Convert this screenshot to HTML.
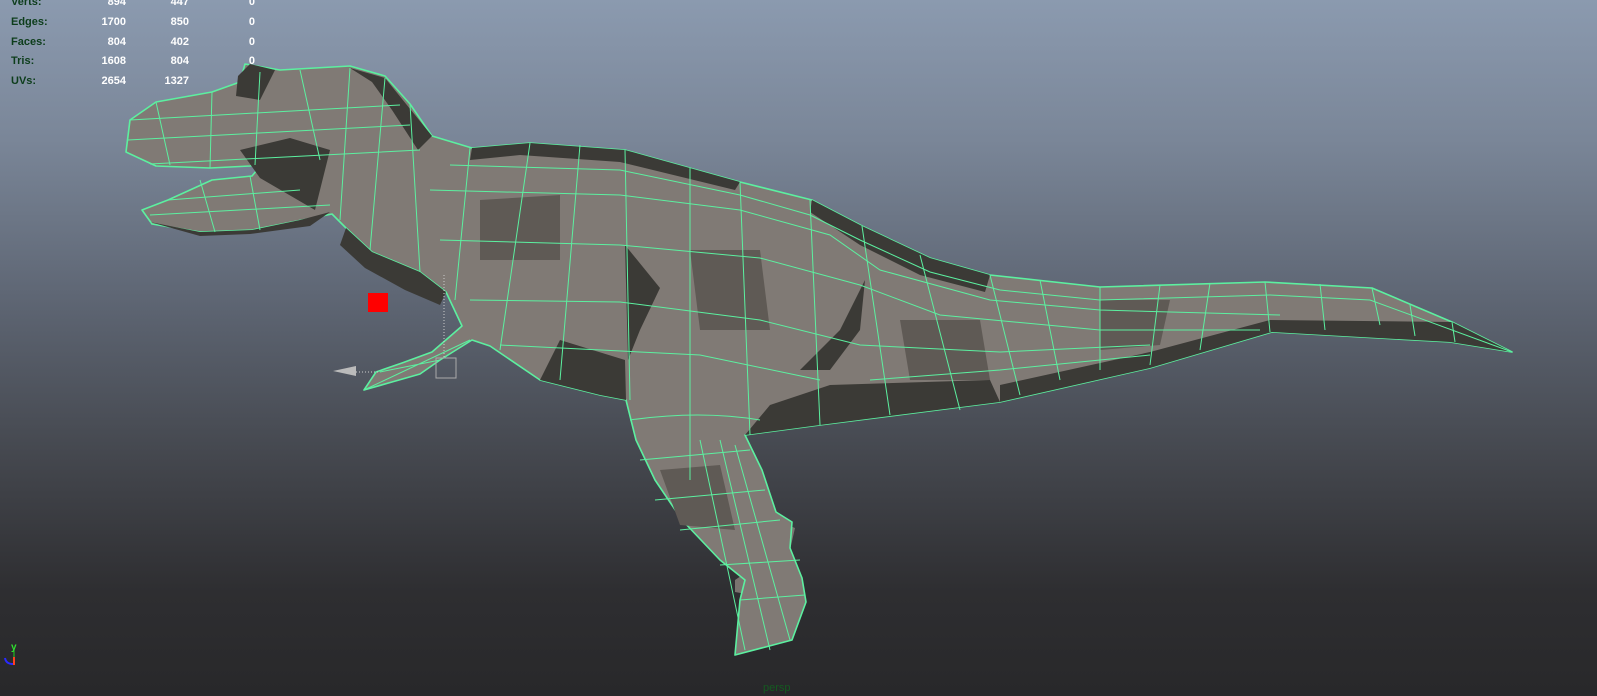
<!DOCTYPE html>
<html><head><meta charset="utf-8"><style>
html,body{margin:0;padding:0;width:1597px;height:696px;overflow:hidden}
body{background:linear-gradient(#8b9aaf 0%,#7a8698 20%,#5f6775 42%,#45484f 65%,#2e2e31 85%,#28282a 100%)}
.t{position:absolute;font:bold 11px "Liberation Sans",sans-serif;color:#0d3d1b}
.n{position:absolute;font:bold 11px "Liberation Sans",sans-serif;color:#fff;text-align:right;width:40px}
</style></head><body>
<div class="t" style="left:11px;top:-4px">Verts:</div>
<div class="t" style="left:11px;top:16px">Edges:</div>
<div class="t" style="left:11px;top:36px">Faces:</div>
<div class="t" style="left:11px;top:55px">Tris:</div>
<div class="t" style="left:11px;top:75px">UVs:</div>
<div class="n" style="left:86px;top:-4px">894</div><div class="n" style="left:149px;top:-4px">447</div><div class="n" style="left:215px;top:-4px">0</div>
<div class="n" style="left:86px;top:16px">1700</div><div class="n" style="left:149px;top:16px">850</div><div class="n" style="left:215px;top:16px">0</div>
<div class="n" style="left:86px;top:36px">804</div><div class="n" style="left:149px;top:36px">402</div><div class="n" style="left:215px;top:36px">0</div>
<div class="n" style="left:86px;top:55px">1608</div><div class="n" style="left:149px;top:55px">804</div><div class="n" style="left:215px;top:55px">0</div>
<div class="n" style="left:86px;top:75px">2654</div><div class="n" style="left:149px;top:75px">1327</div><div class="n" style="left:215px;top:75px">0</div>
<svg width="1597" height="696" style="position:absolute;left:0;top:0">
<polygon points="775,520 795,528 790,550 770,548" fill="#7a7470"/>
<polygon points="735,580 750,570 752,595 735,592" fill="#7a7470"/>
<polygon fill="#807a75" stroke="#5cf0a0" stroke-width="1.6" stroke-linejoin="round" points="
245,64 280,70 350,66 385,76 410,104 432,136 472,148 530,143 625,150 740,182 812,200 862,226 930,258 990,275 1100,287 1265,282 1372,288 1452,322 1512,352 1450,342 1272,332 1150,368 1000,402 820,425 745,435 762,470 776,512 792,522 790,548 802,578 806,602 792,640 735,655 740,600 745,580 720,560 682,520 655,480 636,440 626,400 600,395 540,380 490,346 472,340 440,360 420,374 392,382 364,390 376,372 402,363 432,352 462,326 446,292 420,272 372,252 346,228 332,214 302,220 252,230 200,232 152,224 142,210 168,200 212,180 252,176 262,164 250,166 210,168 156,166 126,152 130,120 156,102 212,92 240,82"/>
<g fill="#3b3a36">
<polygon points="238,76 250,64 275,70 260,100 236,96"/>
<polygon points="350,68 385,78 432,136 418,150 392,110 372,82"/>
<polygon points="472,148 530,143 625,150 740,182 735,190 620,162 520,155 470,160"/>
<polygon points="812,200 862,226 930,258 990,275 985,292 920,275 860,245 810,212"/>
<polygon points="1452,322 1512,352 1450,342 1272,332 1150,368 1000,402 1000,385 1150,352 1270,320"/>
<polygon points="346,228 372,252 420,272 446,292 440,305 405,290 365,268 340,245"/>
<polygon points="625,245 660,288 640,330 628,360"/>
<polygon points="865,280 840,330 800,370 830,370 860,330"/>
<polygon points="745,435 820,425 1000,402 990,380 830,385 770,405"/>
<polygon points="540,380 600,395 626,400 625,360 560,340"/>
<polygon points="240,150 290,138 330,150 315,210 260,178"/>
<polygon points="150,222 200,232 252,230 300,220 330,212 310,226 250,234 200,236"/>
</g>
<g fill="#5f5a55">
<polygon points="480,200 560,195 560,260 480,260"/>
<polygon points="690,250 760,250 770,330 700,330"/>
<polygon points="900,320 980,320 990,380 910,380"/>
<polygon points="1100,300 1170,300 1160,345 1100,350"/>
<polygon points="660,470 720,465 735,530 680,525"/>
</g>
<rect x="368" y="293" width="20" height="19" fill="#ff0000"/>
<g stroke="#5cf0a0" stroke-width="1" fill="none">
<path d="M156,102 L170,165 M212,92 L210,168 M260,72 L255,165 M300,70 L320,160 M350,68 L340,220 M385,78 L370,250"/>
<path d="M130,120 L400,105 M128,140 L410,125 M150,164 L420,150"/>
<path d="M168,200 L300,190 M150,215 L330,205 M200,180 L215,232 M250,176 L260,230"/>
<path d="M410,104 L420,272 M470,148 L455,300 M530,143 L500,350 M580,145 L560,380 M625,150 L630,400 M690,168 L690,480 M740,182 L750,435 M810,200 L820,425 M862,226 L890,415 M920,255 L960,410 M990,275 L1020,395 M1040,280 L1060,380 M1100,287 L1100,370 M1160,285 L1150,365 M1210,283 L1200,350 M1265,282 L1270,332 M1320,284 L1325,330 M1372,288 L1380,325 M1410,305 L1415,336 M1452,322 L1455,342"/>
<path d="M450,165 L620,170 L740,195 L810,215 L860,240 L930,272 L1000,290 L1100,300 L1270,295 L1370,300 L1512,352"/>
<path d="M430,190 L620,195 L740,210 L830,235 L880,270 L990,300 L1100,310 L1280,315"/>
<path d="M440,240 L620,245 L760,258 L860,285 L940,315 L1100,330 L1260,330"/>
<path d="M470,300 L620,302 L760,320 L860,345 L1000,352 L1150,345"/>
<path d="M500,345 L700,355 L820,380"/>
<path d="M870,380 L1000,370 L1150,355"/>
<path d="M630,420 Q700,410 760,420 M640,460 L750,450 M655,500 L765,490 M680,530 L780,520 M720,565 L800,560 M740,600 L805,595"/>
<path d="M700,440 L745,650 M720,440 L770,650 M735,445 L790,640"/>
<path d="M364,390 L470,340 M380,372 L440,360"/>
</g>
<rect x="436" y="358" width="20" height="20" fill="none" stroke="#aaa" stroke-width="1"/>
<line x1="444" y1="275" x2="444" y2="358" stroke="#ccc" stroke-dasharray="1,2"/>
<polygon points="333,371 356,366 356,376" fill="#bbb"/>
<line x1="356" y1="372" x2="380" y2="372" stroke="#ccc" stroke-dasharray="1,2"/>
<line x1="14" y1="662" x2="14" y2="650" stroke="#1fd01f" stroke-width="1"/>
<path d="M5,658 Q6,664 13,664" stroke="#2a2aff" stroke-width="2" fill="none"/>
<line x1="14" y1="657" x2="14" y2="665" stroke="#ff4020" stroke-width="2"/>
<text x="11" y="650" font-family="Liberation Sans,sans-serif" font-size="10" font-weight="bold" fill="#30e030">y</text>
<text x="763" y="691" font-family="Liberation Sans,sans-serif" font-size="11" fill="#145a20">persp</text>
</svg>
</body></html>
